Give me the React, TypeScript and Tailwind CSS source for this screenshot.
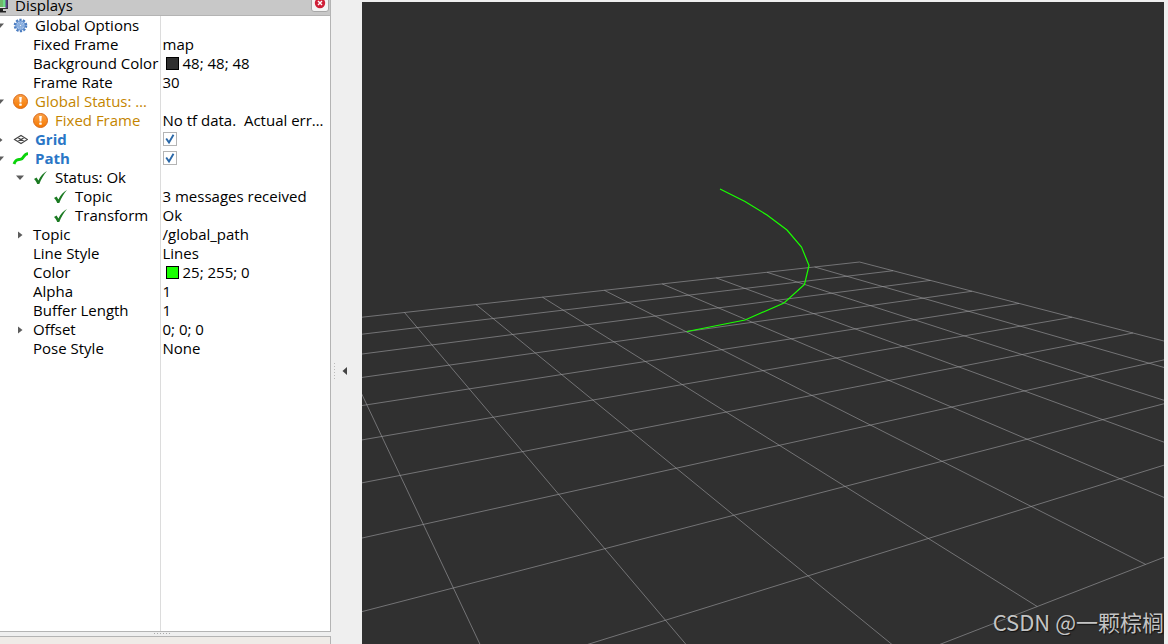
import { useState, type ReactNode } from "react";

/* ---------- icons ---------- */

function MonitorIcon() {
  return (
    <svg viewBox="0 0 16 17" className="h-[17px] w-4" aria-hidden="true">
      <rect x="0.5" y="0.5" width="15" height="12" fill="#e8e8e8" stroke="#333" />
      <rect x="2" y="2" width="12" height="9" fill="#6fb96a" />
      <path d="M11 2h3v9h-3z" fill="#6ddc8b" />
      <path d="M14.500 1v11" stroke="#5a3f86" strokeWidth="2" />
      <path d="M6 13h5v2h3v1.500H3V15h3z" fill="#222" />
    </svg>
  );
}

function GearIcon() {
  return (
    <svg viewBox="0 0 16 16" className="size-4" aria-hidden="true">
      <circle cx="8.500" cy="7.500" r="5.700" fill="none" stroke="#4a7cc0" strokeWidth="2.200" strokeDasharray="2.200 1.380" />
      <circle cx="8.500" cy="7.500" r="4.600" fill="#a3c2ea" stroke="#5585c8" strokeWidth="1" />
      <circle cx="8.500" cy="7.500" r="2.700" fill="none" stroke="#6c98d4" strokeWidth="1" strokeDasharray="1.500 0.800" />
      <circle cx="8.500" cy="7.500" r="1.200" fill="#eaf1fb" stroke="#4577bb" strokeWidth="0.600" />
    </svg>
  );
}

function WarnIcon() {
  return (
    <svg viewBox="0 0 16 16" className="size-4" aria-hidden="true">
      <defs>
        <linearGradient id="warn" x1="0" y1="0" x2="0" y2="1">
          <stop offset="0" stopColor="#fba24a" />
          <stop offset="1" stopColor="#f57900" />
        </linearGradient>
      </defs>
      <circle cx="8.500" cy="7.500" r="7" fill="url(#warn)" stroke="#d8691a" />
      <path d="M7.200 3h2.600l-.4 5.500H7.600z" fill="#fff" />
      <rect x="7.300" y="9.600" width="2.400" height="2.200" rx="0.600" fill="#fff" />
    </svg>
  );
}

function GridIcon() {
  return (
    <svg viewBox="0 0 16 16" className="size-4" aria-hidden="true">
      <path
        d="M2.500 7.500 9 3.500l6.500 4-6.500 4zM5.700 5.500 12.300 9.500M12.300 5.500 5.700 9.500"
        fill="none"
        stroke="#444"
        strokeWidth="1.100"
      />
    </svg>
  );
}

function PathIcon() {
  return (
    <svg viewBox="0 0 16 16" className="size-4" aria-hidden="true">
      <path
        d="M2 13C4 7.500 6 9 9 8.200S11.500 2.800 16 2.600"
        fill="none"
        stroke="#0ad30a"
        strokeWidth="2.900"
      />
    </svg>
  );
}

function OkIcon() {
  return (
    <svg viewBox="0 0 16 16" className="size-4" aria-hidden="true">
      <path d="M2 9 4.600 7.500 6.400 10.400C8.700 6 11.200 3 15 1 11.800 4.600 9.300 8.800 7.300 14H5.200C4.400 12 3.400 10.200 2 9z" fill="#1b7a22" />
    </svg>
  );
}

function CloseIcon() {
  return (
    <svg viewBox="0 0 12 12" className="size-3" aria-hidden="true">
      <circle cx="6" cy="6" r="5.200" fill="#cf2038" />
      <path d="M4 4l4 4M8 4l-4 4" stroke="#fff" strokeWidth="1.400" />
    </svg>
  );
}

/* ---------- property tree ---------- */

type Row = {
  name: string;
  level: 1 | 2 | 3;
  arrow?: "open" | "closed";
  icon?: ReactNode;
  tone?: string;
  value?: string;
  swatch?: string;
  check?: boolean;
};

const rows: Row[] = [
  { name: "Global Options", level: 1, arrow: "open", icon: <GearIcon /> },
  { name: "Fixed Frame", level: 2, value: "map" },
  { name: "Background Color", level: 2, value: "48; 48; 48", swatch: "bg-[#303030]" },
  { name: "Frame Rate", level: 2, value: "30" },
  { name: "Global Status: …", level: 1, arrow: "open", icon: <WarnIcon />, tone: "text-[#c48500]" },
  { name: "Fixed Frame", level: 2, icon: <WarnIcon />, tone: "text-[#c48500]", value: "No tf data.\u00a0 Actual err…" },
  { name: "Grid", level: 1, arrow: "closed", icon: <GridIcon />, tone: "font-bold text-[#2a76c6]", check: true },
  { name: "Path", level: 1, arrow: "open", icon: <PathIcon />, tone: "font-bold text-[#2a76c6]", check: true },
  { name: "Status: Ok", level: 2, arrow: "open", icon: <OkIcon /> },
  { name: "Topic", level: 3, icon: <OkIcon />, value: "3 messages received" },
  { name: "Transform", level: 3, icon: <OkIcon />, value: "Ok" },
  { name: "Topic", level: 2, arrow: "closed", value: "/global_path" },
  { name: "Line Style", level: 2, value: "Lines" },
  { name: "Color", level: 2, value: "25; 255; 0", swatch: "bg-[#19ff00]" },
  { name: "Alpha", level: 2, value: "1" },
  { name: "Buffer Length", level: 2, value: "1" },
  { name: "Offset", level: 2, arrow: "closed", value: "0; 0; 0" },
  { name: "Pose Style", level: 2, value: "None" },
];

const indent = { 1: "-ml-2", 2: "ml-3", 3: "ml-8" };

function Arrow({ state, name }: { state: "open" | "closed"; name: string }) {
  return (
    <button
      type="button"
      aria-label={name}
      aria-expanded={state === "open"}
      className="flex size-4 items-center justify-center"
    >
      <svg viewBox="0 0 8 8" className="size-2" aria-hidden="true">
        <path d={state === "open" ? "M0 1.500h8L4 6z" : "M2 0.500v7L6.500 4z"} fill="#5c5c5c" />
      </svg>
    </button>
  );
}

function Check({ name }: { name: string }) {
  const [on, setOn] = useState(true);
  return (
    <label className="relative mb-0.5 block size-[14px]">
      <input
        type="checkbox"
        aria-label={name}
        checked={on}
        onChange={() => setOn(!on)}
        className="block size-[14px] appearance-none border border-[#b4b4b4] bg-white"
      />
      {on && (
        <svg viewBox="0 0 14 14" className="pointer-events-none absolute inset-0" aria-hidden="true">
          <path d="M3.200 6.500 6 10.500 10.500 2.800" fill="none" stroke="#2a68a8" strokeWidth="1.900" />
        </svg>
      )}
    </label>
  );
}

function PropertyTree() {
  return (
    <table className="h-full w-full table-fixed border-collapse">
      <colgroup>
        <col className="w-40" />
        <col />
      </colgroup>
      <tbody>
        {rows.map((r, i) => (
          <tr key={i} className="h-[19px]">
            <th scope="row" className="overflow-hidden p-0 text-left font-normal">
              <div className={`flex h-[19px] items-center ${indent[r.level]}`}>
                <span className="flex w-4 shrink-0">{r.arrow && <Arrow state={r.arrow} name={r.name} />}</span>
                {r.icon && <span className="ml-1 shrink-0">{r.icon}</span>}
                <span className={`whitespace-nowrap ${r.icon ? "ml-[7px]" : "ml-[5px]"} ${r.tone ?? "text-black"}`}>
                  {r.name}
                </span>
              </div>
            </th>
            <td className="border-l border-[#dcdcdc] p-0">
              <div className="flex h-[19px] items-center pl-0.5 whitespace-nowrap">
                {r.swatch && <span className={`mr-1 ml-[3px] size-[13px] border border-black ${r.swatch}`} />}
                {r.check ? <Check name={r.name} /> : r.value}
              </div>
            </td>
          </tr>
        ))}
        <tr>
          <td className="p-0" />
          <td className="border-l border-[#dcdcdc] p-0" />
        </tr>
      </tbody>
    </table>
  );
}

/* ---------- 3D viewport ---------- */

const CELLS = 10;

/* Perspective projection of a ground-plane cell corner. */
function project(i: number, j: number) {
  const w = 1 - 0.029258 * i - 0.04998 * j;
  return {
    x: (859.5 - 68.71 * i - 11.05 * j) / w - 362,
    y: (262 - 2.831 * i - 4.81 * j) / w - 2,
  };
}

function Viewport() {
  const steps = Array.from({ length: CELLS + 1 }, (_, n) => n);
  const lines = steps.flatMap((n) => [
    [project(n, 0), project(n, CELLS)],
    [project(0, n), project(CELLS, n)],
  ]);
  return (
    <svg
      viewBox="0 0 802 642"
      preserveAspectRatio="xMinYMin slice"
      className="block size-full"
      role="img"
      aria-label="Global path over grid"
    >
      <g stroke="#a0a0a4" strokeOpacity="0.6" strokeWidth="1">
        {lines.map(([a, b], n) => (
          <line key={n} x1={a.x} y1={a.y} x2={b.x} y2={b.y} />
        ))}
      </g>
      <polyline
        points="358,187 383,199.500 405,213 425,228 439.500,245 447,263.500 442.500,282.500 422,301 383,318 325,329.500"
        fill="none"
        stroke="#19ff00"
        strokeWidth="1.200"
      />
    </svg>
  );
}

/* ---------- page ---------- */

export default function App() {
  return (
    <div className="flex h-screen overflow-hidden bg-[#efefef] font-['Open_Sans','Noto_Sans',sans-serif] text-[15px] leading-[19px] text-black">
      <aside className="flex w-[331px] shrink-0 flex-col">
        <header className="flex h-4 items-start border-r border-b border-[#b4b4b4] bg-[#c8c8c8]">
          <span className="-mt-1 -ml-2 shrink-0">
            <MonitorIcon />
          </span>
          <h1 className="ml-[7px] flex-1 leading-[10px]">Displays</h1>
          <button
            type="button"
            aria-label="Close"
            className="-mt-1.5 mr-px flex size-[18px] items-center justify-center rounded-[3px] border border-[#a8a8a8] bg-[#f4f4f4]"
          >
            <CloseIcon />
          </button>
        </header>
        <section className="min-h-0 flex-1 border-r border-b border-[#b4b4b4] bg-white">
          <PropertyTree />
        </section>
        <div className="flex h-1 justify-center gap-0.5 pt-px pr-2">
          {[0, 1, 2, 3, 4, 5].map((n) => (
            <span key={n} className="size-px bg-[#aaa]" />
          ))}
        </div>
        <div className="h-2 border-t border-r border-[#b4b4b4] bg-[#efebe7]" />
      </aside>

      <div className="flex w-[31px] shrink-0 items-center pt-[98px]">
        <span className="ml-[3px] flex flex-col gap-0.5">
          {[0, 1, 2, 3, 4, 5].map((n) => (
            <span key={n} className="size-px bg-[#bbb]" />
          ))}
        </span>
        <button type="button" aria-label="Collapse panel" className="ml-1.5 flex size-2">
          <svg viewBox="0 0 8 8" className="size-2" aria-hidden="true">
            <path d="M6 0v8L1.500 4z" fill="#444" />
          </svg>
        </button>
      </div>

      <main className="relative mt-0.5 mr-1 min-w-0 flex-1 overflow-hidden bg-[#303030]">
        <Viewport />
        <p className="absolute right-0 bottom-[7px] font-['Noto_Sans_CJK_SC',sans-serif] text-[22px] leading-8 whitespace-nowrap text-[#c4c4c4] [text-shadow:1px_1px_1px_#111]">
          CSDN @一颗棕榈
        </p>
      </main>
    </div>
  );
}
